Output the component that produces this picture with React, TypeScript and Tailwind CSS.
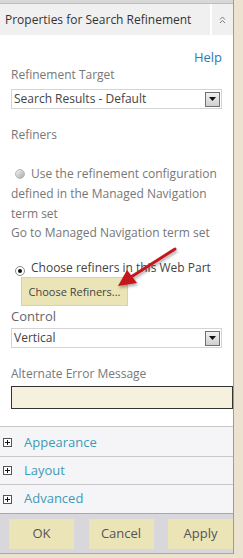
import React from "react"

const font = { fontFamily: '"Open Sans", "Noto Sans", sans-serif' }

const Select: React.FC<{ value: string }> = ({ value }) => {
  return (
    <div className="flex h-[20px] items-center border border-[#d4d4d4] bg-white pl-[2px] pr-[1px] text-[12px] text-[#444]">
      <span className="flex-1 truncate">{value}</span>
      <div className="flex h-[15px] w-[15px] items-center justify-center border border-[#707070] bg-gradient-to-b from-[#f2f2f2] to-[#cfcfcf]">
        <svg width="7" height="4" viewBox="0 0 7 4">
          <path d="M0 0h7L3.5 4z" fill="#111" />
        </svg>
      </div>
    </div>
  )
}

const Radio: React.FC<{ checked?: boolean }> = ({ checked }) => {
  if (checked) {
    return (
      <span className="mr-[6px] inline-flex h-[10px] w-[10px] items-center justify-center rounded-full border border-[#8a8a8a] bg-white align-[-1px]">
        <span className="h-[4px] w-[4px] rounded-full bg-[#111]" />
      </span>
    )
  }
  return (
    <span className="mr-[6px] inline-block h-[10px] w-[10px] rounded-full border border-[#b8b8b8] bg-gradient-to-br from-[#f4f4f4] to-[#a9a9a9] align-[-1px]" />
  )
}

const Section: React.FC<{ label: string; first?: boolean; last?: boolean }> = ({ label, first, last }) => {
  return (
    <div className={`flex items-center ${first ? "h-[30px] pt-[2px]" : "h-[28px]"} ${last ? "" : "border-b border-[#c9c9cc]"}`}>
      <span className="ml-[3px] flex h-[9px] w-[9px] items-center justify-center border border-[#555] bg-white">
        <svg width="7" height="7" viewBox="0 0 7 7">
          <path d="M3.5 1v5M1 3.5h5" stroke="#111" strokeWidth="1" />
        </svg>
      </span>
      <span className="ml-[12px] text-[13px] text-[#3b9bb8]">{label}</span>
    </div>
  )
}

export default function App() {
  return (
    <div className="relative h-[558px] w-[243px] overflow-hidden bg-[#ebe3d0]" style={font}>
      <div className="flex w-[234px] flex-col border-r border-[#9b9b9b] bg-white">
        <div className="h-[4px] border-b border-[#bdbdbd] bg-[#d8d8d8]" />
        <div className="flex h-[31px] bg-[#f0f0f0]">
          <div className="flex flex-1 items-center pl-[5px] text-[12px] text-[#333]">
            Properties for Search Refinement
          </div>
          <div className="mr-[1px] flex w-[22px] items-center justify-center border-l-2 border-white">
            <svg width="7" height="8" viewBox="0 0 7 8">
              <path d="M1 3.5L3.5 1L6 3.5M1 7L3.5 4.5L6 7" stroke="#777" fill="none" strokeWidth="1" />
            </svg>
          </div>
        </div>

        <div className="flex flex-col px-[11px] text-[12px] leading-[18px]">
          <div className="mt-[13px] text-right text-[13px] text-[#2c7cb0]">Help</div>
          <div className="text-[#777]">Refinement Target</div>
          <div className="mt-[5px]">
            <Select value="Search Results - Default" />
          </div>
          <div className="mt-[17px] text-[#777]">Refiners</div>
          <div className="mt-[20px] pl-[4px] leading-[20px] text-[#777]">
            <Radio />Use the refinement configuration <span className="-ml-[4px]">defined in the Managed Navigation</span> <span className="-ml-[4px]">term set</span>
          </div>
          <div className="leading-[18px] text-[#777]">Go to Managed Navigation term set</div>
          <div className="mt-[17px] pl-[4px] text-[#444]">
            <Radio checked />Choose refiners in this Web Part
          </div>
          <div className="ml-[10px] flex h-[29px] w-[107px] items-center justify-center border border-[#d9d2a4] bg-[#ebe4b7] text-[11px] text-[#444]">
            Choose Refiners...
          </div>
          <div className="mt-[1px] text-[13px] text-[#666]">Control</div>
          <div className="mt-[3px]">
            <Select value="Vertical" />
          </div>
          <div className="mt-[17px] text-[#777]">Alternate Error Message</div>
          <div className="mr-[-11px] mt-[3px] h-[23px] border border-[#333] bg-[#f6f0df]" />
        </div>

        <div className="mt-[17px] border-t border-[#c9c9cc] bg-[#f5f5f8]">
          <Section label="Appearance" first />
          <Section label="Layout" />
          <Section label="Advanced" last />
        </div>

        <div className="flex h-[41px] items-center justify-between border-y border-[#a9a9ad] bg-[#d8d8dc] pl-[9px]">
          <div className="flex h-[30px] w-[65px] items-center justify-center bg-[#ebe4b7] text-[13px] text-[#555]">OK</div>
          <div className="flex h-[30px] w-[65px] items-center justify-center bg-[#ebe4b7] text-[13px] text-[#555]">Cancel</div>
          <div className="flex h-[30px] w-[65px] items-center justify-center bg-[#ebe4b7] text-[13px] text-[#555]">Apply</div>
        </div>
      </div>

      <svg className="absolute left-0 top-0" width="243" height="558" viewBox="0 0 243 558">
        <defs>
          <filter id="sh" x="-20%" y="-20%" width="140%" height="140%">
            <feDropShadow dx="1" dy="2" stdDeviation="1.5" floodColor="#000" floodOpacity="0.35" />
          </filter>
        </defs>
        <g filter="url(#sh)">
          <path d="M175 249 L131 277" stroke="#c4161c" strokeWidth="3" strokeLinecap="round" />
          <path d="M118 286 L127 270 L137 283 Z" fill="#c4161c" />
        </g>
      </svg>
    </div>
  )
}
